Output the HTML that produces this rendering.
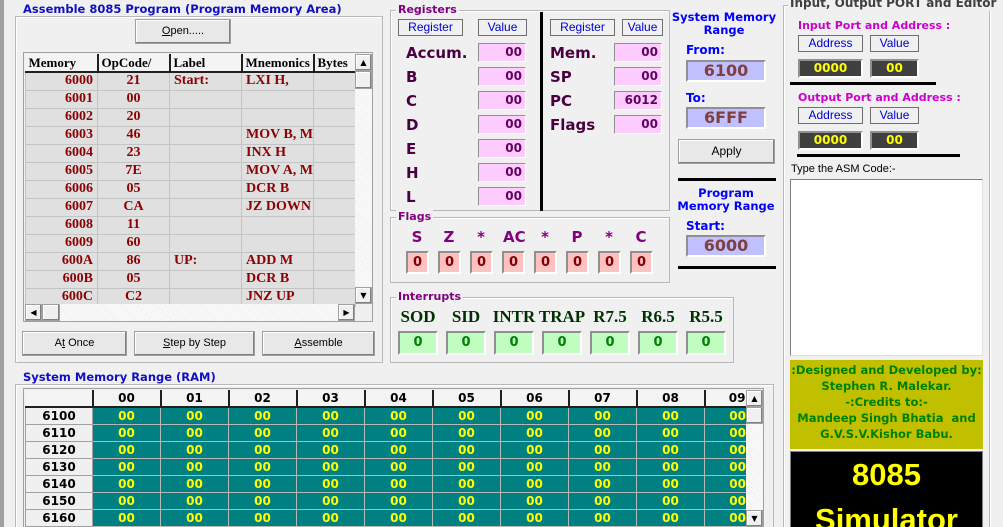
<!DOCTYPE html>
<html style="overflow:hidden"><head><meta charset="utf-8">
<style>
*{box-sizing:border-box;margin:0;padding:0}
html,body{width:1003px;height:527px;overflow:hidden}
body{background:#f0f0f0;position:relative;font-family:"DejaVu Sans","Liberation Sans",sans-serif}
.a{position:absolute}
.gb{position:absolute;border:1px solid #b8b8b8;box-shadow:inset 1px 1px 0 #fff}
.gt{position:absolute;background:#f0f0f0;padding:0 2px;font-weight:bold;font-size:11px;line-height:13px;white-space:nowrap}
.btn{position:absolute;background:#e8e8e8;border:1px solid #a0a0a0;box-shadow:inset -1px -1px 0 #808080,inset 1px 1px 0 #fff;font-size:11px;text-align:center;font-family:"Liberation Sans",sans-serif;color:#000}
.hb{position:absolute;border:1px solid #707070;color:#00c;font-size:12px;text-align:center;line-height:14px;font-family:"Liberation Sans",sans-serif;background:#f0f0f0}
.rl{position:absolute;font-weight:bold;color:#4a0040;font-size:15px;line-height:18px}
.pv{position:absolute;width:48px;height:19px;background:#ffccff;border:1px solid #909090;border-right-color:#fff;border-bottom-color:#fff;color:#600060;font-weight:bold;font-size:12px;text-align:right;padding-right:3px;line-height:17px}
.fl{position:absolute;top:228px;width:20px;text-align:center;color:#800080;font-weight:bold;font-size:15px}
.fb{position:absolute;top:251px;width:23px;height:23px;background:#ffc0c0;border:2px solid #909090;border-right-color:#fff;border-bottom-color:#fff;color:#800000;font-weight:bold;font-size:13px;text-align:center;line-height:19px}
.il{position:absolute;top:307px;color:#003000;font-weight:bold;font-size:17px;font-family:"Liberation Serif",serif;width:48px;text-align:center}
.ib{position:absolute;top:331px;width:40px;height:24px;background:#c0ffc0;border:2px solid #909090;border-right-color:#fff;border-bottom-color:#fff;color:#008000;font-weight:bold;font-size:13px;text-align:center;line-height:20px}
.bl{position:absolute;color:#0000ff;font-weight:bold;font-size:12px;text-align:center;white-space:nowrap}
.mb{position:absolute;left:686px;width:80px;height:22px;background:#c0c0ff;border:2px solid #909090;border-right-color:#fff;border-bottom-color:#fff;color:#804040;font-weight:bold;font-size:16px;text-align:center;line-height:18px}
.line{position:absolute;height:3px;background:#000}
table{border-collapse:collapse;table-layout:fixed}
#pg td{height:18px;border:1px solid #c4c4c4;background:#e0e0e0;color:#8b0000;font-family:"Liberation Serif",serif;font-weight:bold;font-size:14px;line-height:16px;padding:0 4px;white-space:nowrap;overflow:hidden}
#pg th{height:18px;border-right:2px solid #202020;border-bottom:2px solid #202020;font-family:"Liberation Serif",serif;font-weight:bold;font-size:13px;text-align:left;padding:0 3px;background:#f4f4f4;white-space:nowrap;overflow:hidden}
#rm td{height:17px;border:1px solid #b8b8b8;background:#008080;color:#ffff00;font-weight:bold;font-size:12px;text-align:center;line-height:14px;padding:0;overflow:hidden;white-space:nowrap}
#rm td.h{background:#f0f0f0;color:#000;border-color:#a0a0a0}
#rm th{height:17px;background:#f4f4f4;border-right:2px solid #202020;border-bottom:2px solid #202020;font-size:12px;font-weight:bold;padding:0;overflow:hidden}
.sb{position:absolute;background:#f0f0f0;background-image:repeating-linear-gradient(45deg,#fff 0 1px,#eee 1px 2px)}
.sbt{position:absolute;width:17px;height:17px;background:#f0f0f0;border:1px solid #a0a0a0;box-shadow:inset -1px -1px 0 #808080,inset 1px 1px 0 #fff;font-size:8px;text-align:center;line-height:15px;color:#000}
.mag{position:absolute;color:#cc00cc;font-weight:bold;font-size:11px}
.db{position:absolute;height:19px;background:#404040;border:2px solid #909090;border-right-color:#fff;border-bottom-color:#fff;color:#ffff00;font-weight:bold;font-size:12px;text-align:center;line-height:15px}
</style></head><body>
<div class="a" style="left:0;top:0;width:4px;height:527px;background:#a0a0a0"></div>

<div class="gb" style="left:15px;top:16px;width:368px;height:347px"></div>
<div class="gt" style="left:21px;top:3px;color:#1010c0;font-size:11.5px">Assemble 8085 Program (Program Memory Area)</div>
<div class="btn" style="left:135px;top:19px;width:96px;height:25px;line-height:23px"><u>O</u>pen.....</div>
<div class="a" style="left:23px;top:52px;width:350px;height:270px;border:1px solid #a0a0a0;background:#f0f0f0;overflow:hidden">
<table id="pg" style="width:330px;margin-left:1px;margin-top:1px">
<colgroup><col style="width:72px"><col style="width:72px"><col style="width:72px"><col style="width:72px"><col style="width:42px"></colgroup>
<tr><th>Memory</th><th>OpCode/</th><th>Label</th><th>Mnemonics</th><th>Bytes</th></tr>
<tr><td style="text-align:right">6000</td><td style="text-align:center">21</td><td>Start:</td><td>LXI H,</td><td></td></tr>
<tr><td style="text-align:right">6001</td><td style="text-align:center">00</td><td></td><td></td><td></td></tr>
<tr><td style="text-align:right">6002</td><td style="text-align:center">20</td><td></td><td></td><td></td></tr>
<tr><td style="text-align:right">6003</td><td style="text-align:center">46</td><td></td><td>MOV B, M</td><td></td></tr>
<tr><td style="text-align:right">6004</td><td style="text-align:center">23</td><td></td><td>INX H</td><td></td></tr>
<tr><td style="text-align:right">6005</td><td style="text-align:center">7E</td><td></td><td>MOV A, M</td><td></td></tr>
<tr><td style="text-align:right">6006</td><td style="text-align:center">05</td><td></td><td>DCR B</td><td></td></tr>
<tr><td style="text-align:right">6007</td><td style="text-align:center">CA</td><td></td><td>JZ DOWN</td><td></td></tr>
<tr><td style="text-align:right">6008</td><td style="text-align:center">11</td><td></td><td></td><td></td></tr>
<tr><td style="text-align:right">6009</td><td style="text-align:center">60</td><td></td><td></td><td></td></tr>
<tr><td style="text-align:right">600A</td><td style="text-align:center">86</td><td>UP:</td><td>ADD M</td><td></td></tr>
<tr><td style="text-align:right">600B</td><td style="text-align:center">05</td><td></td><td>DCR B</td><td></td></tr>
<tr><td style="text-align:right">600C</td><td style="text-align:center">C2</td><td></td><td>JNZ UP</td><td></td></tr>
</table>
<div class="sb" style="left:331px;top:1px;width:17px;height:250px"></div>
<div class="sbt" style="left:331px;top:1px">▲</div>
<div class="sbt" style="left:331px;top:18px;height:18px"></div>
<div class="sbt" style="left:331px;top:234px">▼</div>
<div class="sb" style="left:1px;top:251px;width:330px;height:17px"></div>
<div class="sbt" style="left:1px;top:251px">◀</div>
<div class="sbt" style="left:18px;top:251px;width:18px"></div>
<div class="sbt" style="left:314px;top:251px">▶</div>
</div>
<div class="btn" style="left:22px;top:331px;width:105px;height:25px;line-height:23px">A<u>t</u> Once</div>
<div class="btn" style="left:134px;top:331px;width:121px;height:25px;line-height:23px"><u>S</u>tep by Step</div>
<div class="btn" style="left:262px;top:331px;width:113px;height:25px;line-height:23px"><u>A</u>ssemble</div>

<div class="gb" style="left:390px;top:10px;width:280px;height:201px"></div>
<div class="gt" style="left:396px;top:3px;color:#800080">Registers</div>
<div class="line" style="left:540px;top:12px;width:3px;height:199px"></div>
<div class="hb" style="left:398px;top:19px;width:65px;height:17px">Register</div>
<div class="hb" style="left:478px;top:19px;width:49px;height:17px">Value</div>
<div class="hb" style="left:550px;top:19px;width:65px;height:17px">Register</div>
<div class="hb" style="left:622px;top:19px;width:41px;height:17px">Value</div>
<div class="rl" style="left:406px;top:44px">Accum.</div><div class="pv" style="left:478px;top:43px">00</div>
<div class="rl" style="left:406px;top:68px">B</div><div class="pv" style="left:478px;top:67px">00</div>
<div class="rl" style="left:406px;top:92px">C</div><div class="pv" style="left:478px;top:91px">00</div>
<div class="rl" style="left:406px;top:116px">D</div><div class="pv" style="left:478px;top:115px">00</div>
<div class="rl" style="left:406px;top:140px">E</div><div class="pv" style="left:478px;top:139px">00</div>
<div class="rl" style="left:406px;top:164px">H</div><div class="pv" style="left:478px;top:163px">00</div>
<div class="rl" style="left:406px;top:188px">L</div><div class="pv" style="left:478px;top:187px">00</div>
<div class="rl" style="left:550px;top:44px">Mem.</div><div class="pv" style="left:614px;top:43px">00</div>
<div class="rl" style="left:550px;top:68px">SP</div><div class="pv" style="left:614px;top:67px">00</div>
<div class="rl" style="left:550px;top:92px">PC</div><div class="pv" style="left:614px;top:91px">6012</div>
<div class="rl" style="left:550px;top:116px">Flags</div><div class="pv" style="left:614px;top:115px">00</div>

<div class="gb" style="left:390px;top:217px;width:280px;height:66px"></div>
<div class="gt" style="left:396px;top:210px;color:#800080">Flags</div>
<div class="fl" style="left:407px">S</div><div class="fb" style="left:406px">0</div>
<div class="fl" style="left:439px">Z</div><div class="fb" style="left:438px">0</div>
<div class="fl" style="left:471px">*</div><div class="fb" style="left:470px">0</div>
<div class="fl" style="left:503px;width:22px">AC</div><div class="fb" style="left:502px">0</div>
<div class="fl" style="left:535px">*</div><div class="fb" style="left:534px">0</div>
<div class="fl" style="left:567px">P</div><div class="fb" style="left:566px">0</div>
<div class="fl" style="left:599px">*</div><div class="fb" style="left:598px">0</div>
<div class="fl" style="left:631px">C</div><div class="fb" style="left:630px">0</div>

<div class="gb" style="left:390px;top:297px;width:344px;height:66px"></div>
<div class="gt" style="left:396px;top:290px;color:#800080">Interrupts</div>
<div class="il" style="left:394px">SOD</div><div class="ib" style="left:398px">0</div>
<div class="il" style="left:442px">SID</div><div class="ib" style="left:446px">0</div>
<div class="il" style="left:490px">INTR</div><div class="ib" style="left:494px">0</div>
<div class="il" style="left:537px;width:50px">TRAP</div><div class="ib" style="left:542px">0</div>
<div class="il" style="left:586px">R7.5</div><div class="ib" style="left:590px">0</div>
<div class="il" style="left:634px">R6.5</div><div class="ib" style="left:638px">0</div>
<div class="il" style="left:682px">R5.5</div><div class="ib" style="left:686px">0</div>

<div class="bl" style="left:668px;top:11px;width:112px;line-height:13px;font-size:11.5px">System Memory<br>Range</div>
<div class="bl" style="left:686px;top:43px">From:</div>
<div class="mb" style="top:60px">6100</div>
<div class="bl" style="left:686px;top:91px">To:</div>
<div class="mb" style="top:107px">6FFF</div>
<div class="btn" style="left:678px;top:139px;width:97px;height:25px;line-height:23px;font-size:12px">Apply</div>
<div class="line" style="left:678px;top:178px;width:98px"></div>
<div class="bl" style="left:670px;top:187px;width:112px;line-height:13px;font-size:11.5px">Program<br>Memory Range</div>
<div class="bl" style="left:686px;top:219px">Start:</div>
<div class="mb" style="top:235px">6000</div>
<div class="line" style="left:678px;top:266px;width:98px"></div>

<div class="gb" style="left:783px;top:5px;width:207px;height:525px"></div>
<div class="a" style="left:990px;top:0;width:13px;height:527px;background:#f0f0f0;border-left:1px solid #fff"></div>
<div class="gt" style="left:788px;top:-4px;color:#404040;font-size:12px;line-height:15px">Input, Output PORT and Editor</div>
<div class="mag" style="left:798px;top:19px">Input Port and Address :</div>
<div class="hb" style="left:798px;top:35px;width:65px;height:17px">Address</div>
<div class="hb" style="left:870px;top:35px;width:49px;height:17px">Value</div>
<div class="db" style="left:798px;top:59px;width:65px">0000</div>
<div class="db" style="left:870px;top:59px;width:49px">00</div>
<div class="line" style="left:790px;top:82px;width:146px"></div>
<div class="mag" style="left:798px;top:91px">Output Port and Address :</div>
<div class="hb" style="left:798px;top:107px;width:65px;height:17px">Address</div>
<div class="hb" style="left:870px;top:107px;width:49px;height:17px">Value</div>
<div class="db" style="left:798px;top:131px;width:65px">0000</div>
<div class="db" style="left:870px;top:131px;width:49px">00</div>
<div class="line" style="left:797px;top:154px;width:163px"></div>
<div class="a" style="left:791px;top:163px;font-size:11px;font-family:'Liberation Sans',sans-serif">Type the ASM Code:-</div>
<div class="a" style="left:790px;top:179px;width:193px;height:177px;background:#fff;border:1px solid #808080;border-right-color:#e0e0e0;border-bottom-color:#e0e0e0"></div>
<div class="a" style="left:790px;top:360px;width:193px;height:89px;background:#c0c000;color:#008000;font-weight:bold;font-size:11.5px;text-align:center;line-height:16px;padding-top:2px;white-space:nowrap">:Designed and Developed by:<br>Stephen R. Malekar.<br>-:Credits to:-<br>Mandeep Singh Bhatia&nbsp; and<br>G.V.S.V.Kishor Babu.</div>
<div class="a" style="left:790px;top:451px;width:193px;height:76px;background:#000;border:1px solid #808080;border-bottom:none;color:#ffff00;font-weight:bold;font-size:31px;text-align:center;line-height:45px;font-family:'Liberation Sans',sans-serif;overflow:hidden">8085<br>Simulator</div>

<div class="gb" style="left:15px;top:384px;width:759px;height:146px"></div>
<div class="gt" style="left:21px;top:371px;color:#1010c0;font-size:11.5px">System Memory Range (RAM)</div>
<div class="a" style="left:23px;top:388px;width:741px;height:139px;border:1px solid #a0a0a0;border-bottom:none;background:#f0f0f0;overflow:hidden">
<table id="rm" style="width:747px;margin-left:1px;margin-top:1px">
<colgroup><col style="width:67px"><col style="width:68px"><col style="width:68px"><col style="width:68px"><col style="width:68px"><col style="width:68px"><col style="width:68px"><col style="width:68px"><col style="width:68px"><col style="width:68px"><col style="width:68px"></colgroup>
<tr><th></th><th>00</th><th>01</th><th>02</th><th>03</th><th>04</th><th>05</th><th>06</th><th>07</th><th>08</th><th style="text-align:right;padding-right:26px">09</th></tr>
<tr><td class="h">6100</td><td>00</td><td>00</td><td>00</td><td>00</td><td>00</td><td>00</td><td>00</td><td>00</td><td>00</td><td style="text-align:right;padding-right:26px">00</td></tr>
<tr><td class="h">6110</td><td>00</td><td>00</td><td>00</td><td>00</td><td>00</td><td>00</td><td>00</td><td>00</td><td>00</td><td style="text-align:right;padding-right:26px">00</td></tr>
<tr><td class="h">6120</td><td>00</td><td>00</td><td>00</td><td>00</td><td>00</td><td>00</td><td>00</td><td>00</td><td>00</td><td style="text-align:right;padding-right:26px">00</td></tr>
<tr><td class="h">6130</td><td>00</td><td>00</td><td>00</td><td>00</td><td>00</td><td>00</td><td>00</td><td>00</td><td>00</td><td style="text-align:right;padding-right:26px">00</td></tr>
<tr><td class="h">6140</td><td>00</td><td>00</td><td>00</td><td>00</td><td>00</td><td>00</td><td>00</td><td>00</td><td>00</td><td style="text-align:right;padding-right:26px">00</td></tr>
<tr><td class="h">6150</td><td>00</td><td>00</td><td>00</td><td>00</td><td>00</td><td>00</td><td>00</td><td>00</td><td>00</td><td style="text-align:right;padding-right:26px">00</td></tr>
<tr><td class="h">6160</td><td>00</td><td>00</td><td>00</td><td>00</td><td>00</td><td>00</td><td>00</td><td>00</td><td>00</td><td style="text-align:right;padding-right:26px">00</td></tr>
<tr><td class="h">6170</td><td>00</td><td>00</td><td>00</td><td>00</td><td>00</td><td>00</td><td>00</td><td>00</td><td>00</td><td style="text-align:right;padding-right:26px">00</td></tr>
</table>
<div class="sb" style="left:722px;top:1px;width:17px;height:145px"></div>
<div class="sbt" style="left:722px;top:1px">▲</div>
<div class="sbt" style="left:722px;top:18px"></div>
<div class="sbt" style="left:722px;top:121px">▼</div>
</div>
</body></html>
